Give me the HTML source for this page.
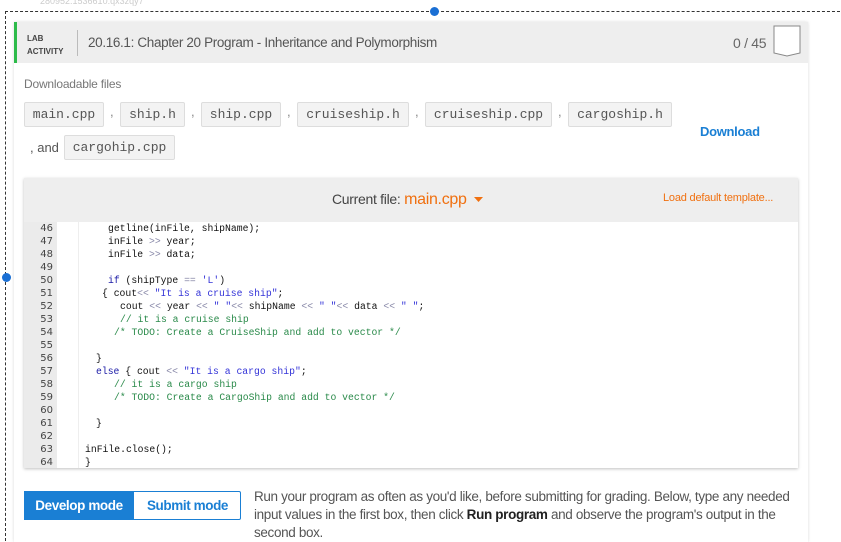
<!DOCTYPE html>
<html><head><style>
*{margin:0;padding:0;box-sizing:border-box}
body{width:841px;height:538px;overflow:hidden;background:#fff;font-family:"Liberation Sans",sans-serif;position:relative}
.a{position:absolute}
.fb{position:absolute;top:102px;height:25px;background:#f3f3f3;border:1px solid #ddd;border-radius:2px;font-family:"Liberation Mono",monospace;font-size:13px;color:#555;text-align:center;line-height:23px}
.cm{position:absolute;top:104px;font-size:13px;color:#888}
.ln{position:absolute;left:24px;width:33px;text-align:right;padding-right:4px;font-family:"DejaVu Sans",sans-serif;font-size:10px;color:#444;line-height:13px}
.cd{position:absolute;font-family:"Liberation Mono",monospace;font-size:9.75px;color:#111;white-space:pre;line-height:13px}
.k{color:#1a1aa6}.s{color:#3434d8}.c{color:#2a8a4a}.o{color:#8888a8}
</style></head><body>
<div class="a" style="left:40px;top:-4px;font-size:9px;color:#ccc">280952.1536610.qx3zqy7</div>
<div class="a" style="left:5px;top:11px;width:840px;border-top:1px dashed #333"></div>
<div class="a" style="left:5px;top:11px;height:530px;border-left:1px dashed #333"></div>
<div class="a" style="left:430px;top:7px;width:9px;height:9px;border-radius:50%;background:#1a6fd4"></div>
<div class="a" style="left:2px;top:273px;width:9px;height:9px;border-radius:50%;background:#1a6fd4"></div>

<div class="a" style="left:14px;top:22px;width:794px;height:520px;box-shadow:0 0 3px rgba(0,0,0,.15)"></div>
<div class="a" style="left:14px;top:22px;width:794px;height:41px;background:#eee"></div>
<div class="a" style="left:14px;top:22px;width:3px;height:41px;background:#2dbb4a"></div>
<div class="a" style="left:27px;top:32px;font-size:8px;font-weight:bold;color:#444;line-height:13px">LAB<br>ACTIVITY</div>
<div class="a" style="left:77px;top:30px;width:1px;height:26px;background:#bbb"></div>
<div class="a" style="left:88px;top:35px;font-size:13.5px;letter-spacing:-0.35px;color:#555">20.16.1: Chapter 20 Program - Inheritance and Polymorphism</div>
<div class="a" style="left:733px;top:35px;font-size:14px;color:#666;letter-spacing:-0.3px">0 / 45</div>
<svg class="a" style="left:773px;top:25px" width="28" height="32"><path d="M1 1H27V28L14 31L1 28Z" fill="#fff" stroke="#888"/></svg>

<div class="a" style="left:24px;top:77px;font-size:12px;color:#777;letter-spacing:-0.2px">Downloadable files</div>
<div class="fb" style="left:24px;width:80px">main.cpp</div><div class="cm" style="left:110px">,</div>
<div class="fb" style="left:120px;width:65px">ship.h</div><div class="cm" style="left:191px">,</div>
<div class="fb" style="left:201px;width:80px">ship.cpp</div><div class="cm" style="left:287px">,</div>
<div class="fb" style="left:297px;width:112px">cruiseship.h</div><div class="cm" style="left:415px">,</div>
<div class="fb" style="left:425px;width:127px">cruiseship.cpp</div><div class="cm" style="left:558px">,</div>
<div class="fb" style="left:568px;width:104px">cargoship.h</div>
<div class="a" style="left:30px;top:140px;font-size:13px;color:#555">, and</div>
<div class="fb" style="left:64px;top:135px;width:111px">cargohip.cpp</div>
<div class="a" style="left:700px;top:124px;font-size:13px;font-weight:bold;color:#1a7fd4;letter-spacing:-0.3px">Download</div>

<div class="a" style="left:24px;top:178px;width:774px;height:290px;box-shadow:0 1px 3px rgba(0,0,0,.25)"></div>
<div class="a" style="left:24px;top:178px;width:774px;height:44px;background:#eee"></div>
<div class="a" style="left:332px;top:191px;font-size:14px;color:#444;letter-spacing:-0.3px">Current file: <span style="color:#f07010;font-size:16px">main.cpp</span></div>
<svg class="a" style="left:474px;top:197px" width="10" height="6"><path d="M0 0H9L4.5 5Z" fill="#f07010"/></svg>
<div class="a" style="left:663px;top:192px;font-size:11px;color:#f07010;letter-spacing:-0.2px">Load default template...</div>
<div class="a" style="left:24px;top:222px;width:774px;height:246px;background:#fff"></div>
<div class="a" style="left:24px;top:222px;width:33px;height:246px;background:#ebebeb"></div>
<div class="a" style="left:78px;top:222px;width:1px;height:246px;background:#eee"></div>

<div class="ln" style="top:222px">46</div><div class="cd" style="left:108px;top:222px">getline(inFile, shipName);</div>
<div class="ln" style="top:235px">47</div><div class="cd" style="left:108px;top:235px">inFile <span class="o">&gt;&gt;</span> year;</div>
<div class="ln" style="top:248px">48</div><div class="cd" style="left:108px;top:248px">inFile <span class="o">&gt;&gt;</span> data;</div>
<div class="ln" style="top:261px">49</div>
<div class="ln" style="top:274px">50</div><div class="cd" style="left:108px;top:274px"><span class="k">if</span> (shipType <span class="o">==</span> <span class="s">'L'</span>)</div>
<div class="ln" style="top:287px">51</div><div class="cd" style="left:102px;top:287px">{ cout<span class="o">&lt;&lt;</span> <span class="s">"It is a cruise ship"</span>;</div>
<div class="ln" style="top:300px">52</div><div class="cd" style="left:120px;top:300px">cout <span class="o">&lt;&lt;</span> year <span class="o">&lt;&lt;</span> <span class="s">" "</span><span class="o">&lt;&lt;</span> shipName <span class="o">&lt;&lt;</span> <span class="s">" "</span><span class="o">&lt;&lt;</span> data <span class="o">&lt;&lt;</span> <span class="s">" "</span>;</div>
<div class="ln" style="top:313px">53</div><div class="cd c" style="left:120px;top:313px">// it is a cruise ship</div>
<div class="ln" style="top:326px">54</div><div class="cd c" style="left:114px;top:326px">/* TODO: Create a CruiseShip and add to vector */</div>
<div class="ln" style="top:339px">55</div>
<div class="ln" style="top:352px">56</div><div class="cd" style="left:96px;top:352px">}</div>
<div class="ln" style="top:365px">57</div><div class="cd" style="left:96px;top:365px"><span class="k">else</span> { cout <span class="o">&lt;&lt;</span> <span class="s">"It is a cargo ship"</span>;</div>
<div class="ln" style="top:378px">58</div><div class="cd c" style="left:114px;top:378px">// it is a cargo ship</div>
<div class="ln" style="top:391px">59</div><div class="cd c" style="left:114px;top:391px">/* TODO: Create a CargoShip and add to vector */</div>
<div class="ln" style="top:404px">60</div>
<div class="ln" style="top:417px">61</div><div class="cd" style="left:96px;top:417px">}</div>
<div class="ln" style="top:430px">62</div>
<div class="ln" style="top:443px">63</div><div class="cd" style="left:85px;top:443px">inFile.close();</div>
<div class="ln" style="top:456px">64</div><div class="cd" style="left:85px;top:456px">}</div>

<div class="a" style="left:24px;top:491px;width:217px;height:29px;border:1px solid #1a7fd4;border-radius:2px;background:#fff"></div>
<div class="a" style="left:24px;top:491px;width:110px;height:29px;background:#1a7fd4;color:#fff;font-size:13.5px;letter-spacing:-0.4px;font-weight:bold;text-align:center;line-height:29px">Develop mode</div>
<div class="a" style="left:134px;top:491px;width:107px;height:29px;color:#1a7fd4;font-size:13.5px;letter-spacing:-0.4px;font-weight:bold;text-align:center;line-height:29px">Submit mode</div>
<div class="a" style="left:254px;top:488px;width:545px;font-size:13.5px;letter-spacing:-0.35px;line-height:18px;color:#555">Run your program as often as you'd like, before submitting for grading. Below, type any needed input values in the first box, then click <b style="color:#222">Run program</b> and observe the program's output in the second box.</div>
</body></html>
